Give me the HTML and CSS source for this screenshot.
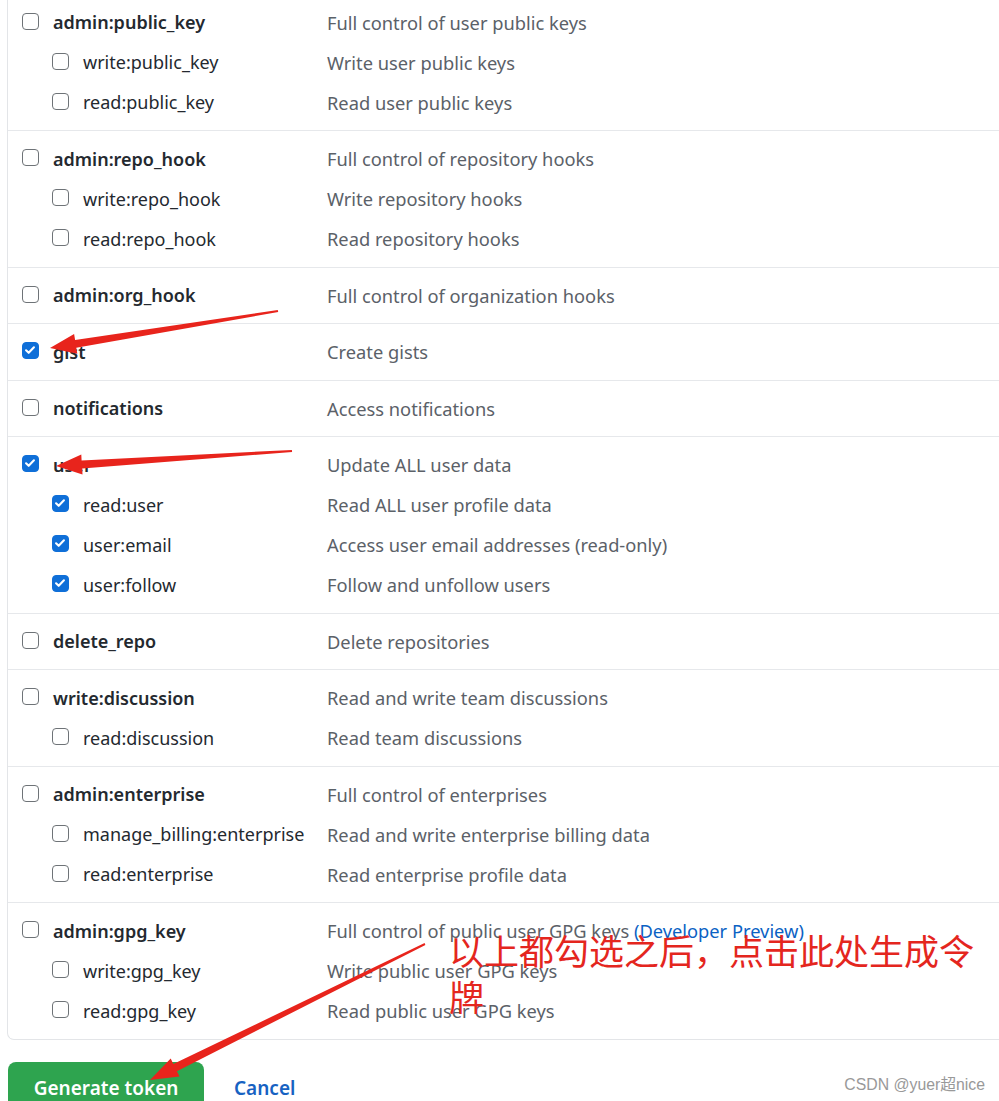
FILE: index.html
```html
<!DOCTYPE html>
<html lang="en">
<head>
<meta charset="utf-8">
<title>Scopes</title>
<link rel="stylesheet" href="styles.css">
</head>
<body>
<div class="page">
  <div class="scopes">
    <div class="group">
      <div class="line top"><span class="cb"></span><span class="name">admin:public_key</span><span class="desc">Full control of user public keys</span></div>
      <div class="line sub"><span class="cb"></span><span class="name">write:public_key</span><span class="desc">Write user public keys</span></div>
      <div class="line sub"><span class="cb"></span><span class="name">read:public_key</span><span class="desc">Read user public keys</span></div>
    </div>
    <div class="group">
      <div class="line top"><span class="cb"></span><span class="name">admin:repo_hook</span><span class="desc">Full control of repository hooks</span></div>
      <div class="line sub"><span class="cb"></span><span class="name">write:repo_hook</span><span class="desc">Write repository hooks</span></div>
      <div class="line sub"><span class="cb"></span><span class="name">read:repo_hook</span><span class="desc">Read repository hooks</span></div>
    </div>
    <div class="group">
      <div class="line top"><span class="cb"></span><span class="name">admin:org_hook</span><span class="desc">Full control of organization hooks</span></div>
    </div>
    <div class="group">
      <div class="line top"><span class="cb on"><svg viewBox="0 0 16 16"><path d="M3.5 8.3l3 2.9 6-6.3"/></svg></span><span class="name">gist</span><span class="desc">Create gists</span></div>
    </div>
    <div class="group">
      <div class="line top"><span class="cb"></span><span class="name">notifications</span><span class="desc">Access notifications</span></div>
    </div>
    <div class="group">
      <div class="line top"><span class="cb on"><svg viewBox="0 0 16 16"><path d="M3.5 8.3l3 2.9 6-6.3"/></svg></span><span class="name">user</span><span class="desc">Update ALL user data</span></div>
      <div class="line sub"><span class="cb on"><svg viewBox="0 0 16 16"><path d="M3.5 8.3l3 2.9 6-6.3"/></svg></span><span class="name">read:user</span><span class="desc">Read ALL user profile data</span></div>
      <div class="line sub"><span class="cb on"><svg viewBox="0 0 16 16"><path d="M3.5 8.3l3 2.9 6-6.3"/></svg></span><span class="name">user:email</span><span class="desc">Access user email addresses (read-only)</span></div>
      <div class="line sub"><span class="cb on"><svg viewBox="0 0 16 16"><path d="M3.5 8.3l3 2.9 6-6.3"/></svg></span><span class="name">user:follow</span><span class="desc">Follow and unfollow users</span></div>
    </div>
    <div class="group">
      <div class="line top"><span class="cb"></span><span class="name">delete_repo</span><span class="desc">Delete repositories</span></div>
    </div>
    <div class="group">
      <div class="line top"><span class="cb"></span><span class="name">write:discussion</span><span class="desc">Read and write team discussions</span></div>
      <div class="line sub"><span class="cb"></span><span class="name">read:discussion</span><span class="desc">Read team discussions</span></div>
    </div>
    <div class="group">
      <div class="line top"><span class="cb"></span><span class="name">admin:enterprise</span><span class="desc">Full control of enterprises</span></div>
      <div class="line sub"><span class="cb"></span><span class="name">manage_billing:enterprise</span><span class="desc">Read and write enterprise billing data</span></div>
      <div class="line sub"><span class="cb"></span><span class="name">read:enterprise</span><span class="desc">Read enterprise profile data</span></div>
    </div>
    <div class="group">
      <div class="line top"><span class="cb"></span><span class="name">admin:gpg_key</span><span class="desc">Full control of public user GPG keys <a class="link" href="#">(Developer Preview)</a></span></div>
      <div class="line sub"><span class="cb"></span><span class="name">write:gpg_key</span><span class="desc">Write public user GPG keys</span></div>
      <div class="line sub"><span class="cb"></span><span class="name">read:gpg_key</span><span class="desc">Read public user GPG keys</span></div>
    </div>
  </div>
  <div class="actions">
    <button class="btn-primary" type="button">Generate token</button>
    <a class="cancel" href="#">Cancel</a>
  </div>

  <svg class="arrows" viewBox="0 0 999 1101" width="999" height="1101">
    <polygon points="277.8,310 75.1,339.9 74.1,333.9 50,348 77.3,353.7 76.3,347.7 278.2,312"/>
    <polygon points="291.9,450 81.6,460.4 81.3,454.4 56,466 82.5,474.4 82.2,468.4 292.1,452"/>
    <polygon points="424.6,943.1 173.3,1064 170.7,1058.6 150,1080 179.5,1076.6 176.9,1071.2 425.4,944.9"/>
  </svg>
  <div class="note">以上都勾选之后，点击此处生成令牌</div>
  <div class="watermark">CSDN @yuer超nice</div>
</div>
</body>
</html>
```

FILE: styles.css
```css
html, body {
  margin: 0;
  padding: 0;
  background: #ffffff;
}

body {
  font-family: "Noto Sans", "Open Sans", sans-serif;
  color: #24292f;
  overflow: hidden;
}

.page {
  position: relative;
  width: 999px;
  height: 1101px;
  overflow: hidden;
}

.scopes {
  margin-top: -5.5px;
  margin-left: 7px;
  width: 1010px;
  border-left: 1px solid #e3e5e8;
  border-bottom: 1px solid #e3e5e8;
  border-bottom-left-radius: 7px;
}

.group {
  padding: 7.75px 0;
  border-top: 1px solid #e6e8eb;
}

.group:first-child {
  border-top: 0;
}

.line {
  position: relative;
  display: grid;
  align-items: center;
  height: 40px;
  font-size: 18px;
}

.line .cb {
  position: absolute;
}

.top {
  padding-left: 45px;
  grid-template-columns: 274px 1fr;
}

.top .cb {
  left: 14px;
}

.sub {
  padding-left: 75px;
  grid-template-columns: 244px 1fr;
}

.sub .cb {
  left: 44px;
}

.cb {
  top: 10.5px;
  width: 17px;
  height: 17px;
  box-sizing: border-box;
  border: 1.5px solid #6e7377;
  border-radius: 4px;
  background: #fff;
}

.cb.on {
  background: #0f6fd8;
  border-color: #0f6fd8;
}

.cb svg {
  display: block;
  width: 14px;
  height: 14px;
  fill: none;
  stroke: #fff;
  stroke-width: 2.4;
  stroke-linecap: round;
  stroke-linejoin: round;
}

.name {
  color: #24292f;
  white-space: nowrap;
}

.top .name {
  font-weight: 600;
}

.desc {
  color: #5b6168;
  font-size: 18.3px;
  white-space: nowrap;
}

.link {
  color: #0b62c4;
  text-decoration: none;
}

.actions {
  display: flex;
  align-items: center;
  gap: 30px;
  margin-top: 22px;
  margin-left: 8px;
}

.btn-primary {
  width: 196px;
  height: 52px;
  border: 0;
  border-radius: 8px;
  background: #2ea44f;
  color: #ffffff;
  font-family: "Noto Sans", "Open Sans", sans-serif;
  font-size: 19px;
  font-weight: 600;
  padding: 0;
}

.cancel {
  color: #1762c2;
  font-size: 19px;
  font-weight: 600;
  text-decoration: none;
}

.arrows {
  position: absolute;
  left: 0;
  top: 0;
  pointer-events: none;
}

.arrows polygon {
  fill: #e8241c;
}

.note {
  position: absolute;
  left: 449px;
  top: 927px;
  width: 535px;
  font-family: "Noto Sans CJK SC", sans-serif;
  font-size: 35px;
  line-height: 46px;
  color: #e4261e;
}

.watermark {
  position: absolute;
  right: 14px;
  top: 1072px;
  font-family: "Liberation Sans", "Noto Sans CJK SC", sans-serif;
  font-size: 15.8px;
  color: #999999;
}
```
